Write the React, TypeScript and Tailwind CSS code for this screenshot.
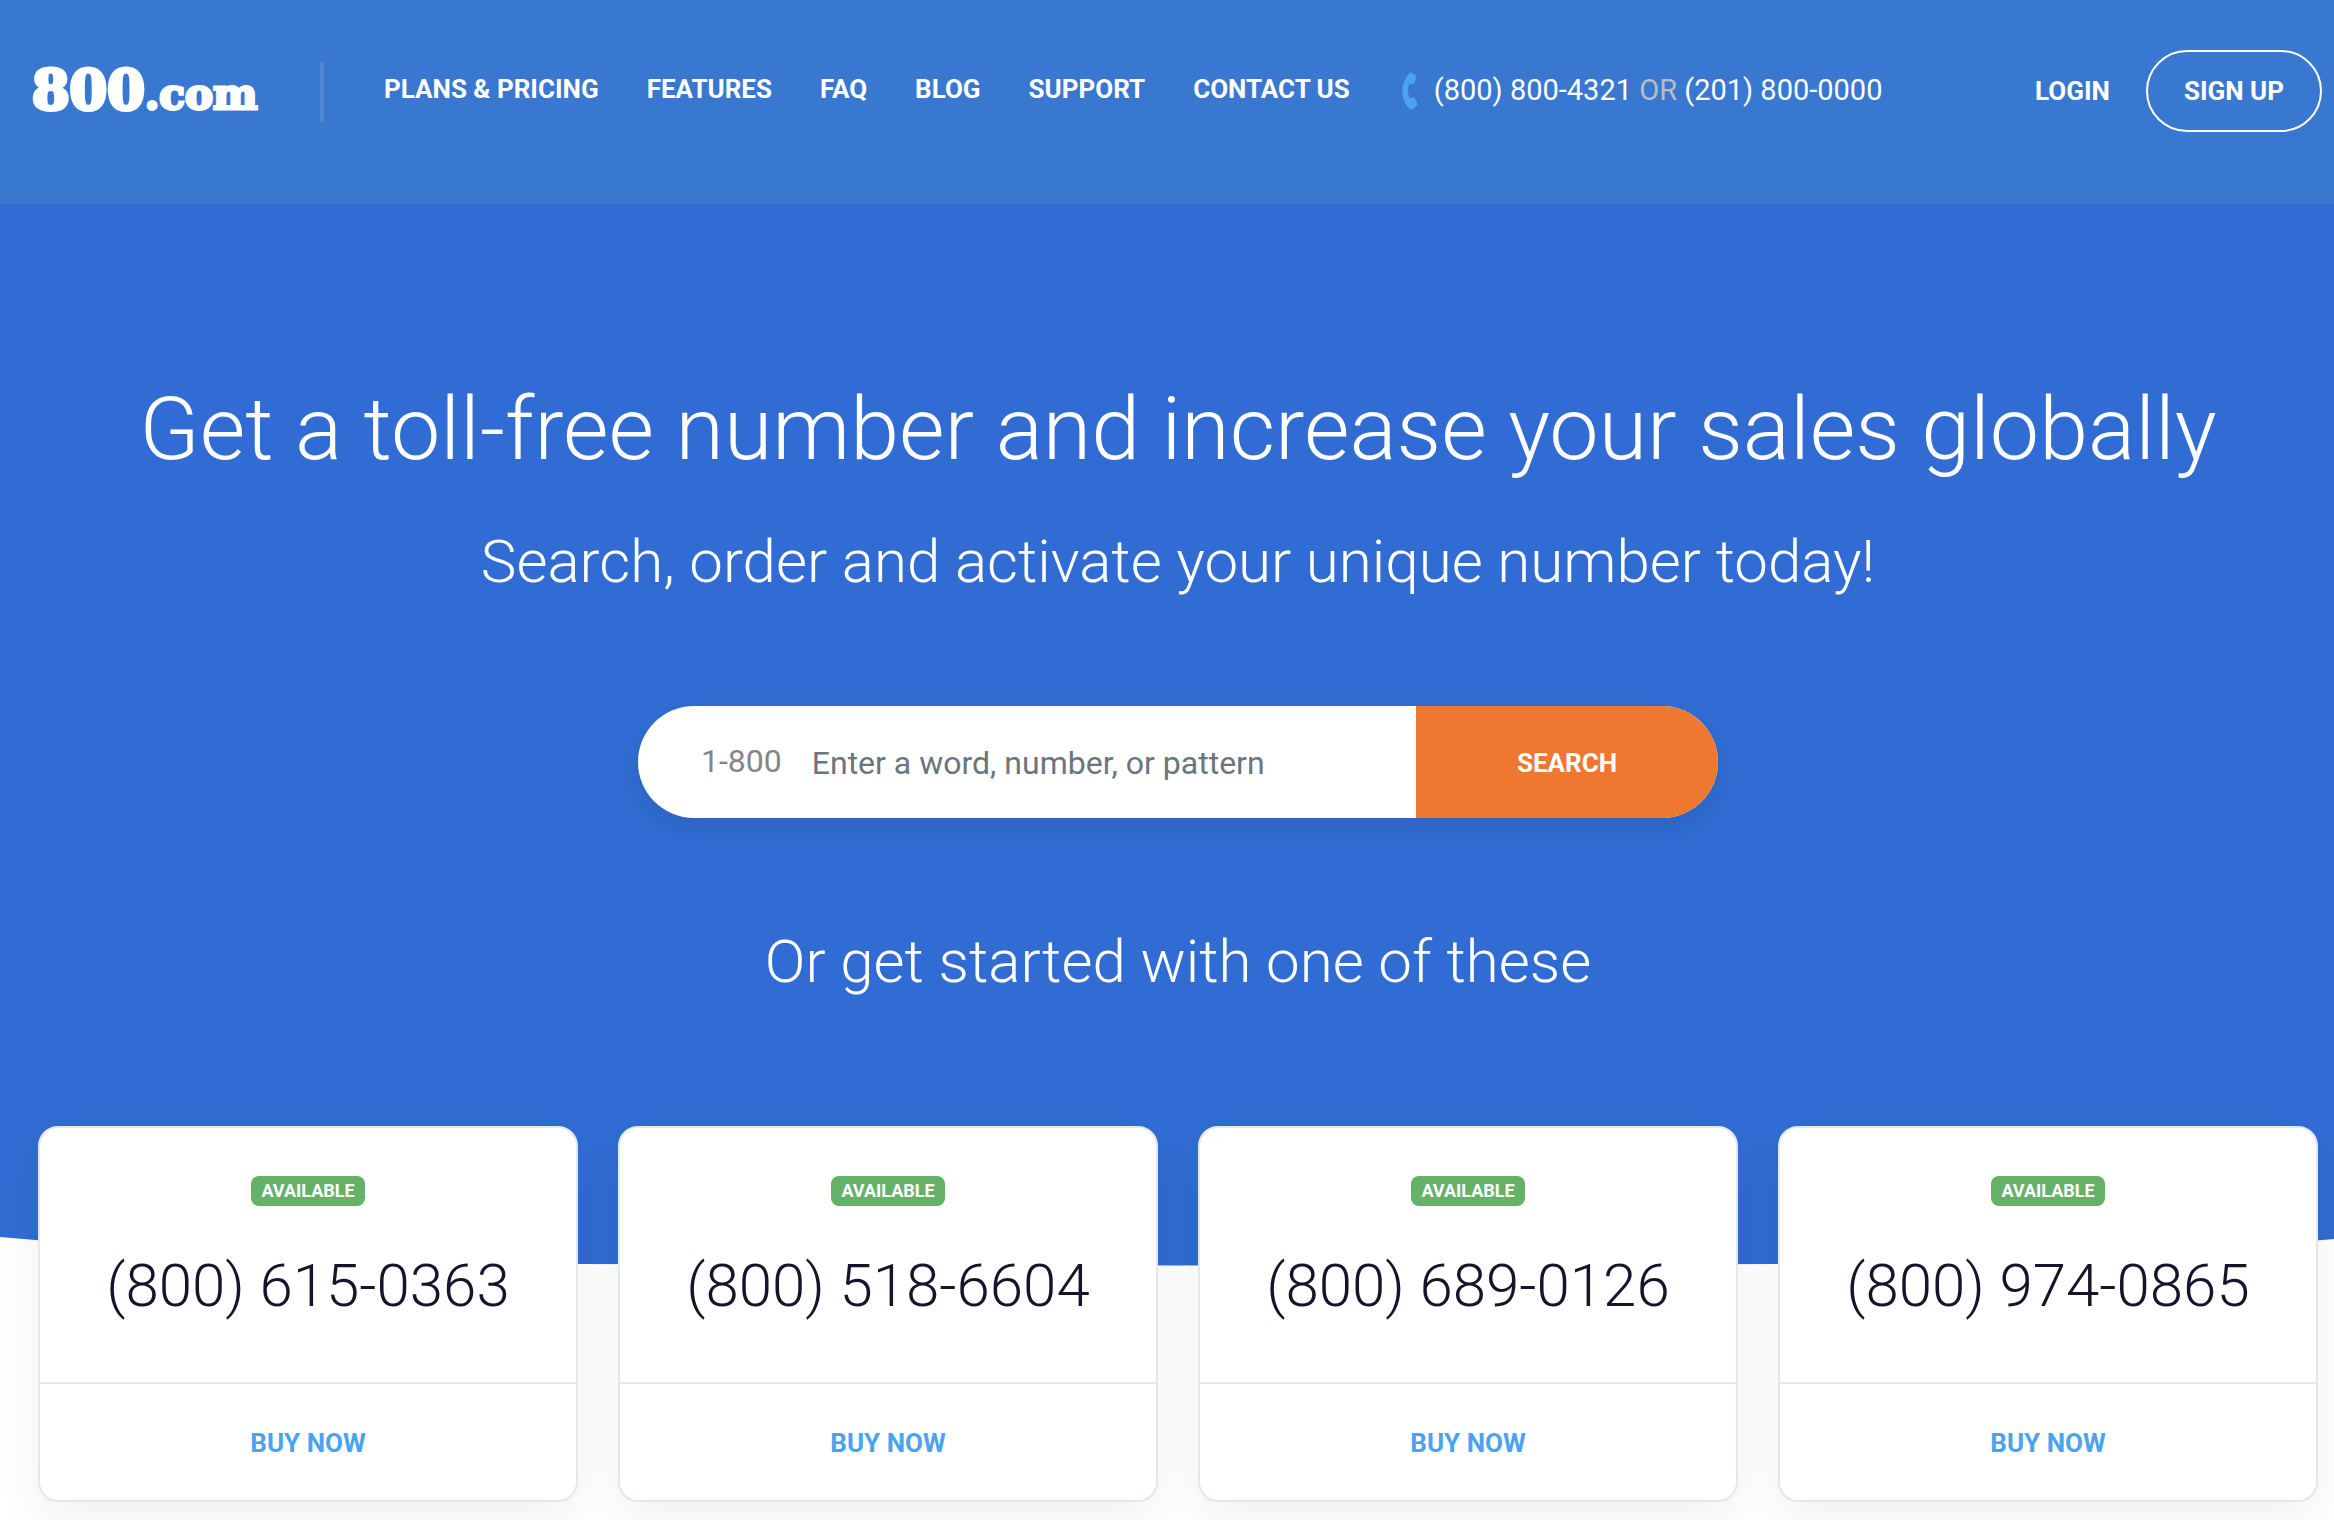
import { FormEvent, useState } from 'react';

const navLinks = ['Plans & Pricing', 'Features', 'FAQ', 'Blog', 'Support', 'Contact Us'];

const numbers = ['(800) 615-0363', '(800) 518-6604', '(800) 689-0126', '(800) 974-0865'];

function Logo() {
  return (
    <a
      href="#"
      aria-label="800.com home"
      className="flex w-[232px] shrink-0 items-baseline font-['DejaVu_Serif',serif] leading-[60px] font-bold text-white normal-case"
    >
      <span className="text-[54px] [-webkit-text-stroke:4px_white]">800</span>
      <span className="text-[42px] [-webkit-text-stroke:3px_white]">.com</span>
    </a>
  );
}

function PhoneIcon() {
  return (
    <svg className="h-[38px] w-4 shrink-0" viewBox="0 0 16 38" fill="#4ba3f0" aria-hidden="true">
      <path d="M8.500 0.300C8 0.300 7.500 0.800 7 1.500C2.500 7 0.300 12.500 0.300 19C0.300 26 3 32.500 8 37C9 37.900 10 37.800 10.800 37L15.200 33.500C15.800 33 15.800 32.500 15.500 31.700L12.800 26C12.500 25.300 12 25.200 11.300 25.300L7.500 26C5.500 21.500 5.500 16.500 7 12L10.800 12.300C11.500 12.300 12 12 12.200 11.300L14.500 5C14.800 4.200 14.600 3.700 14 3.200Z" />
    </svg>
  );
}

function Header() {
  return (
    <header className="flex min-h-[204px] items-start bg-[#3978d0] pt-[50px] pr-3 pl-8 text-[26px] font-bold text-white uppercase">
      <div className="flex h-[84px] items-center">
        <Logo />
        <span className="ml-14 h-[60px] w-1 shrink-0 bg-[#5088d8]" />
      </div>
      <nav className="ml-[60px] flex h-[78px] items-center gap-12 whitespace-nowrap">
        {navLinks.map((link) => (
          <a key={link} href="#">
            {link}
          </a>
        ))}
      </nav>
      <div className="ml-13 flex h-[82px] items-center gap-4 text-[29px] font-normal whitespace-nowrap">
        <PhoneIcon />
        <p>
          <a href="tel:8008004321">(800) 800-4321</a> <span className="text-[#b9bcc4]">or</span>{' '}
          <a href="tel:2018000000">(201) 800-0000</a>
        </p>
      </div>
      <div className="ml-auto flex h-[82px] items-center gap-9 whitespace-nowrap">
        <a href="#">Login</a>
        <a href="#" className="flex h-full items-center rounded-full border-2 border-white px-9">
          Sign up
        </a>
      </div>
    </header>
  );
}

function SearchForm() {
  const [query, setQuery] = useState('');

  const handleSubmit = (e: FormEvent) => e.preventDefault();

  return (
    <form
      onSubmit={handleSubmit}
      className="mx-auto flex h-28 w-full max-w-[1080px] overflow-hidden rounded-full bg-white shadow-[0_10px_20px_rgba(40,50,90,0.14)]"
    >
      <label htmlFor="number-search" className="flex items-center pb-[2px] pl-[63px] text-[32px] text-[#858585]">
        1-800
      </label>
      <input
        id="number-search"
        type="text"
        value={query}
        onChange={(e) => setQuery(e.target.value)}
        placeholder="Enter a word, number, or pattern"
        className="min-w-0 flex-1 pt-[2px] pl-[30px] text-[32px] text-[#6c757d] outline-none placeholder:text-[#6c757d]"
      />
      <button type="submit" className="w-[302px] bg-[#ee7830] pt-[2px] text-[26px] font-bold text-white uppercase">
        Search
      </button>
    </form>
  );
}

function NumberCard({ number }: { number: string }) {
  return (
    <article className="rounded-[20px] border-2 border-[#e2e8eb] bg-white text-center shadow-[0_16px_48px_rgba(0,0,0,0.06)]">
      <div className="flex h-[254px] flex-col items-center pt-12">
        <span className="rounded-lg bg-[#65b168] px-2.5 text-[18px] leading-[30px] font-bold text-white uppercase">
          Available
        </span>
        <h3 className="mt-11 text-[60px] leading-[72px] font-light text-[#14142b]">{number}</h3>
      </div>
      <div className="border-t-2 border-[#e2e8eb]">
        <a
          href="#"
          className="flex h-[116px] items-center justify-center pt-[2px] text-[26px] font-bold text-[#4ba3f0] uppercase"
        >
          Buy now
        </a>
      </div>
    </article>
  );
}

export default function App() {
  return (
    <div className="overflow-hidden bg-white font-[Roboto,sans-serif]">
      <Header />
      <main className="relative isolate pr-4 pb-[18px] pl-[38px]">
        {/* Blue backdrop, curved along its lower edge */}
        <div className="absolute inset-x-0 top-0 -z-10 flex h-[1062px] flex-col">
          <div className="flex-1 bg-[#306cd3]" />
          <svg className="-mt-px h-[30px] w-full" viewBox="0 0 2334 30" preserveAspectRatio="none" fill="#306cd3" aria-hidden="true">
            <path d="M0 0H2334V3Q2060 27 1778 28L1178 29.500L580 28Q290 27 0 1Z" />
          </svg>
        </div>

        <div className="pt-[172px] text-center font-light text-white">
          <h1 className="text-[88px] leading-[106px]">
            Get a toll-free number and increase your sales globally
          </h1>
          <p className="mt-11 text-[60px] leading-[72px]">Search, order and activate your unique number today!</p>
        </div>

        <div className="mt-[108px]">
          <SearchForm />
        </div>

        <h2 className="mt-[108px] text-center text-[60px] leading-[72px] font-light text-white">
          Or get started with one of these
        </h2>

        <div className="mt-32 grid grid-cols-4 gap-10">
          {numbers.map((number) => (
            <NumberCard key={number} number={number} />
          ))}
        </div>
      </main>
    </div>
  );
}
